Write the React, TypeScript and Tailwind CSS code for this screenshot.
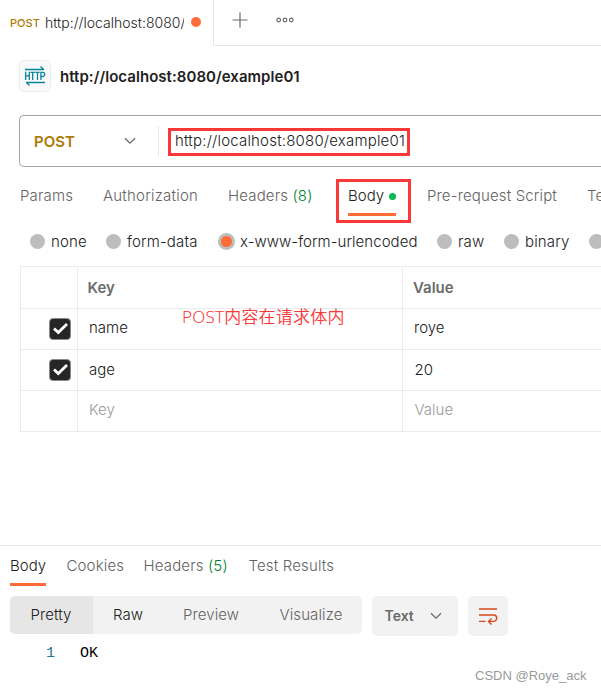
import type { ReactNode } from 'react';

function Chevron({ className = '' }: { className?: string }) {
  return (
    <svg className={className} width="12" height="8" viewBox="0 0 12 8" fill="none" stroke="#6b6b6b" strokeWidth="1.3">
      <path d="M1 1.2 6 6.2 11 1.2" />
    </svg>
  );
}

function TopTabs() {
  return (
    <header className="flex h-[46px]">
      <div className="flex w-[214px] shrink-0 items-center border-r border-[#e6e6e6] pl-[10px]">
        <span className="w-[35px] shrink-0 pb-px text-[11px] font-medium tracking-[0.05px] text-[#ad7a03]">POST</span>
        <span className="w-[139px] shrink-0 overflow-hidden whitespace-nowrap pb-px text-[14px] tracking-[0.01px]">http://localhost:8080/</span>
        <i className="mb-[2px] ml-[7px] size-[10px] shrink-0 rounded-full bg-[#ff6c37]" />
      </div>
      <div className="ml-px flex grow items-start border-b border-[#e6e6e6] pl-[17px] pt-[12px]">
        <svg width="16" height="16" viewBox="0 0 16 16" stroke="#6b6b6b" strokeWidth="1.2">
          <path d="M8 0.5V15.5M0.5 8H15.5" />
        </svg>
        <svg className="ml-[28px] mt-[5px]" width="18" height="6" viewBox="0 0 18 6" fill="none" stroke="#6b6b6b" strokeWidth="1.2">
          <circle cx="2.7" cy="3" r="1.8" />
          <circle cx="9" cy="3" r="1.8" />
          <circle cx="15.3" cy="3" r="1.8" />
        </svg>
      </div>
    </header>
  );
}

function HttpIcon() {
  return (
    <div className="flex size-8 items-center justify-center rounded-[5px] border border-[#ececec] bg-[#f9f9f9]">
      <svg width="22" height="22" viewBox="0 0 22 22" fill="none" stroke="#0b8599" strokeWidth="1.3">
        <path d="M1 4.5H20M16.5 1.5 19.6 4.5M21 17.5H2M5.5 20.5 2.4 17.5" />
        <path d="M1.7 6.7V15M5.3 6.7V15M1.7 10.8H5.3M6.5 7.3H10.9M8.7 7.3V15M11.4 7.3H15.6M13.5 7.3V15M16.9 15V7.3H18.8A1.9 2.1 0 0 1 18.8 11.5H16.9" />
      </svg>
    </div>
  );
}

function Radio({ label, on = false }: { label: string; on?: boolean }) {
  return (
    <div className="flex items-center whitespace-nowrap">
      <i className={`flex shrink-0 items-center justify-center rounded-full bg-[#bdbdbd] ${on ? 'mr-[5px] size-[17px]' : 'mr-[6px] size-[15px]'}`}>
        {on && <i className="size-[11px] rounded-full bg-[#ff6c37]" />}
      </i>
      <span className={`relative top-px ${on ? 'tracking-[0.05px]' : 'tracking-[0.15px]'}`}>{label}</span>
    </div>
  );
}

function Check() {
  return (
    <i className="flex size-[22px] items-center justify-center rounded-[4px] border border-[#8a8a8a] bg-[#262626]">
      <svg width="15" height="12" viewBox="0 0 15 12" fill="none" stroke="#fff" strokeWidth="2.8">
        <path d="M1 5.5 5.3 9.5 14 1" />
      </svg>
    </i>
  );
}

function Row({ height, tone, checked, k, v }: { height: string; tone: string; checked?: boolean; k: ReactNode; v: ReactNode }) {
  return (
    <div className={`grid grid-cols-[57px_325px_1fr] border-b border-[#ebebeb] ${height} ${tone}`}>
      <div className="flex items-center border-r border-[#ebebeb] pb-px pl-[28px]">{checked && <Check />}</div>
      <div className="flex items-center border-r border-[#ebebeb]">{k}</div>
      <div className="flex items-center">{v}</div>
    </div>
  );
}

export default function App() {
  return (
    <main className="h-[692px] w-[601px] overflow-hidden bg-white font-['Inter','Noto_Sans_CJK_SC',sans-serif] text-[15px] font-[350] leading-5 text-[#212121]">
      <TopTabs />

      <section className="flex h-[69px] items-center pb-[9px] pl-[19px]">
        <HttpIcon />
        <h1 className="ml-[9px] pt-px text-[15px] font-semibold tracking-[0.05px]">http://localhost:8080/example01</h1>
      </section>

      <section className="ml-[19px] flex h-[52px] items-center rounded-l-[5px] border border-r-0 border-[#a6a6a6]">
        <span className="w-[90px] pl-[14px] pt-px font-semibold text-[#ad7a03]">POST</span>
        <Chevron className="ml-[14px]" />
        <i className="ml-[22px] h-[30px] w-px bg-[#e6e6e6]" />
        <div className="ml-[9px] mt-px flex h-[28px] w-[242px] items-center whitespace-nowrap border-[3px] border-[#fb3838] pb-px pl-[4px] tracking-[0.19px]">
          http://localhost:8080/example01
        </div>
      </section>

      <nav className="mt-[12px] grid h-[44px] grid-cols-[83px_125px_108px_75px_176px_60px] items-center whitespace-nowrap pl-[20px] tracking-[0.15px] text-[#636363]">
        <span className="pb-[10px]">Params</span>
        <span className="pb-[10px] tracking-[0.22px]">Authorization</span>
        <span className="pb-[10px]">Headers <span className="text-[#007f31]">(8)</span></span>
        <div className="h-[44px] border-[3px] border-[#fb3838] pl-[9px] pr-[12px] tracking-normal text-[#212121]">
          <div className="flex h-[34px] items-center justify-between border-b-[3px] border-[#ff6c37] pb-[3px]">
            Body
            <i className="size-[7px] shrink-0 rounded-full bg-[#0cbb52]" />
          </div>
        </div>
        <span className="pb-[10px] pl-[16px]">Pre-request Script</span>
        <span className="pb-[10px]">Tests</span>
      </nav>

      <section className="grid h-[36px] grid-cols-[76px_112px_219px_67px_85px_80px] items-center pl-[30px]">
        <Radio label="none" />
        <Radio label="form-data" />
        <Radio label="x-www-form-urlencoded" on />
        <Radio label="raw" />
        <Radio label="binary" />
        <Radio label="GraphQL" />
      </section>

      <section className="relative ml-[20px] mt-[7px] border-l border-t border-[#ebebeb]">
        <Row height="h-[42px]" tone="font-semibold text-[#6b6b6b]" k={<span className="pl-[9.5px]">Key</span>} v={<span className="pl-[10px]">Value</span>} />
        <Row height="h-[41px]" tone="" checked k={<span className="pb-[2px] pl-[11px]">name</span>} v={<span className="pb-[2px] pl-[11px]">roye</span>} />
        <Row height="h-[41px]" tone="" checked k={<span className="pl-[11px]">age</span>} v={<span className="pl-[11.5px]">20</span>} />
        <Row height="h-[41px]" tone="text-[#999]" k={<span className="pb-[2px] pl-[11px]">Key</span>} v={<span className="pb-[2px] pl-[11.5px]">Value</span>} />
        <p className="absolute left-[161px] top-[40px] whitespace-nowrap font-['Noto_Sans','Noto_Sans_CJK_SC',sans-serif] text-[17px] tracking-[0.2px] text-[#fb3838]">
          POST内容在请求体内
        </p>
      </section>

      <section className="mt-[113px] border-t border-[#e6e6e6]">
        <nav className="grid h-[40px] grid-cols-[57px_77px_105px_100px] whitespace-nowrap pl-[10px] tracking-[0.15px] text-[#636363]">
          <span className="h-full w-[36px] border-b-[3px] border-[#ff6c37] pt-[10px] tracking-normal text-[#212121]">Body</span>
          <span className="-ml-[0.5px] pt-[10px]">Cookies</span>
          <span className="-ml-[0.5px] pt-[10px]">Headers <span className="text-[#007f31]">(5)</span></span>
          <span className="-ml-[0.5px] pt-[10px]">Test Results</span>
        </nav>
        <div className="mt-[10px] flex items-start pl-[10px] tracking-[0.1px] text-[#636363]">
          <div className="grid h-[38px] w-[352px] grid-cols-[83px_70px_97px_102px] items-center overflow-hidden rounded-[5px] bg-[#f2f2f2] text-center">
            <span className="h-full bg-[#e6e6e6] pr-px leading-[38px] text-[#212121]">Pretty</span>
            <span className="text-[#212121]">Raw</span>
            <span className="pr-px">Preview</span>
            <span>Visualize</span>
          </div>
          <div className="ml-[10px] flex h-[40px] w-[86px] items-center rounded-[5px] bg-[#f2f2f2] pl-[12.5px] text-[14px] font-semibold tracking-normal text-[#6b6b6b]">
            Text
            <Chevron className="ml-[16.5px]" />
          </div>
          <div className="ml-[10px] flex size-[40px] items-center justify-center rounded-[5px] bg-[#f2f2f2]">
            <svg width="20" height="18" viewBox="0 0 20 18" fill="none" stroke="#d4481b" strokeWidth="1.4">
              <path d="M1 2H19M1 8H15.5A3.2 3.2 0 0 1 15.5 14.4H10.5M1 14.4H7.5M13.5 11.4 10.5 14.4 13.5 17.4" />
            </svg>
          </div>
        </div>
        <div className="mt-[8px] flex items-center pl-[46px] font-['Liberation_Mono',monospace] text-[15px]">
          <span className="w-[34px] text-[#237893]">1</span>
          <span className="text-black">OK</span>
        </div>
      </section>

      <footer className="mt-[2px] pl-[475px] font-['Liberation_Sans',sans-serif] text-[13px] text-[#999]">CSDN @Roye_ack</footer>
    </main>
  );
}
